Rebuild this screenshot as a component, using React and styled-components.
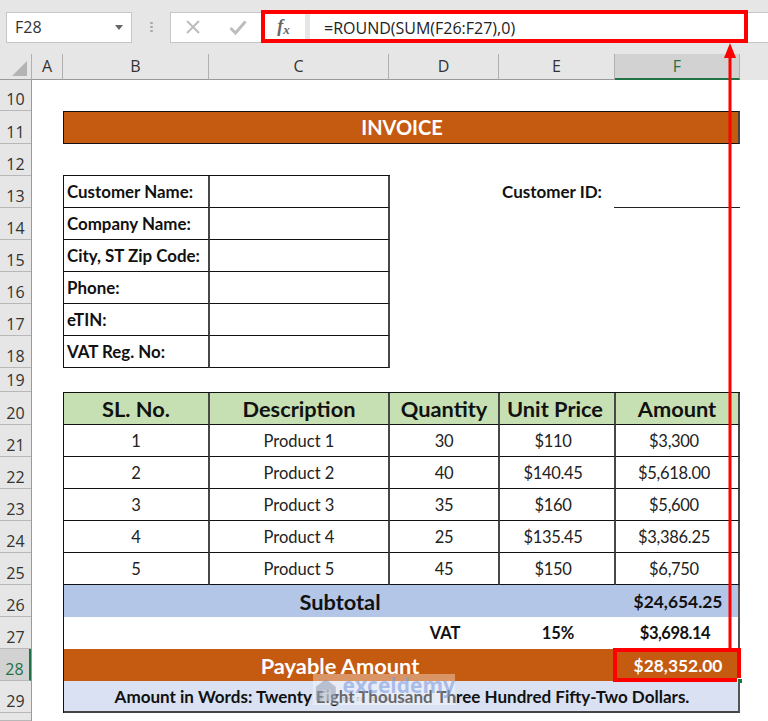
import React from "react";
import styled, { createGlobalStyle } from "styled-components";

const GlobalStyle = createGlobalStyle`
  html, body {
    margin: 0;
    padding: 0;
    background: #fff;
  }
  body {
    font-family: "Lato", "Open Sans", sans-serif;
    color: #111;
  }
`;

const COLS = [
  { name: "A", width: 31 },
  { name: "B", width: 146 },
  { name: "C", width: 180 },
  { name: "D", width: 110 },
  { name: "E", width: 116 },
  { name: "F", width: 125, active: true },
];

const ROWS = [
  [10, 31], [11, 33], [12, 32], [13, 32], [14, 32], [15, 32], [16, 32], [17, 32], [18, 32],
  [19, 24], [20, 33], [21, 32], [22, 32], [23, 32], [24, 32], [25, 32], [26, 32], [27, 32],
  [28, 32], [29, 32], [30, 8],
];

const customerLabels = ["Customer Name:", "Company Name:", "City, ST Zip Code:", "Phone:", "eTIN:", "VAT Reg. No:"];

const products = [
  [1, "Product 1", 30, "$110", "$3,300"],
  [2, "Product 2", 40, "$140.45", "$5,618.00"],
  [3, "Product 3", 35, "$160", "$5,600"],
  [4, "Product 4", 25, "$135.45", "$3,386.25"],
  [5, "Product 5", 45, "$150", "$6,750"],
];

const App = () => {
  return (
    <Page>
      <GlobalStyle />
      <Toolbar>
        <NameBox>
          F28
          <Caret />
        </NameBox>
        <Grip />
        <FormulaButtons>
          <svg width="14" height="14" viewBox="0 0 14 14">
            <path d="M1 1 L13 13 M13 1 L1 13" stroke="#bdbdbd" strokeWidth="2" fill="none" />
          </svg>
          <svg width="18" height="15" viewBox="0 0 18 15">
            <path d="M1.5 8 L6.5 13 L16.5 1.5" stroke="#bdbdbd" strokeWidth="3" fill="none" />
          </svg>
        </FormulaButtons>
        <FxButton>
          f<sub>x</sub>
        </FxButton>
        <FormulaInput>=ROUND(SUM(F26:F27),0)</FormulaInput>
      </Toolbar>

      <ColumnBar>
        <Corner>
          <svg width="15" height="15" viewBox="0 0 15 15">
            <path d="M15 0 V15 H0 Z" fill="#b4b4b4" />
          </svg>
        </Corner>
        {COLS.map((col) => (
          <ColumnHead key={col.name} $width={col.width} $active={col.active}>
            {col.name}
          </ColumnHead>
        ))}
      </ColumnBar>

      <SheetArea>
        <RowBar>
          {ROWS.map(([num, height]) => (
            <RowHead key={num} $height={height} $active={num === 28}>
              {num !== 30 && num}
            </RowHead>
          ))}
        </RowBar>

        <Sheet>
          <Spacer $height={31} />
          <InvoiceBar>INVOICE</InvoiceBar>
          <Spacer $height={31} />

          <CustomerSection>
            <Table>
              {customerLabels.map((label) => (
                <Row key={label}>
                  <LabelCell $width={146}>{label}</LabelCell>
                  <Cell $width={180} />
                </Row>
              ))}
            </Table>
            <CustomerId>
              <CustomerIdLabel>Customer ID:</CustomerIdLabel>
              <CustomerIdLine />
            </CustomerId>
          </CustomerSection>

          <Spacer $height={24} />

          <Table>
            <Row>
              <HeadCell $width={146}>SL. No.</HeadCell>
              <HeadCell $width={180}>Description</HeadCell>
              <HeadCell $width={110}>Quantity</HeadCell>
              <HeadCell $width={116} $shift={4}>Unit Price</HeadCell>
              <HeadCell $width={124}>Amount</HeadCell>
            </Row>
            {products.map(([no, name, qty, price, amount]) => (
              <Row key={no}>
                <Cell $width={146}>{no}</Cell>
                <Cell $width={180}>{name}</Cell>
                <NumberCell $width={110}>{qty}</NumberCell>
                <NumberCell $width={116} $shift={8}>{price}</NumberCell>
                <NumberCell $width={124} $shift={6}>{amount}</NumberCell>
              </Row>
            ))}
            <SummaryRow $bg="#b4c6e7">
              <SummaryCell $width={552} $size={21.8}>Subtotal</SummaryCell>
              <SummaryCell $width={124} $size={17.4}>$24,654.25</SummaryCell>
            </SummaryRow>
            <SummaryRow $bg="#fff">
              <SummaryCell $width={326} />
              <SummaryCell $width={110} $size={16.5}>VAT</SummaryCell>
              <SummaryCell $width={116} $size={16.5}>15%</SummaryCell>
              <TightSummaryCell $width={124} $shift={6}>$3,698.14</TightSummaryCell>
            </SummaryRow>
            <SummaryRow $bg="#c55a11" $color="#fff">
              <SummaryCell $width={552} $size={21.8}>Payable Amount</SummaryCell>
              <SummaryCell $width={124} $size={17.4}>$28,352.00</SummaryCell>
            </SummaryRow>
            <WordsRow $bg="#d9e1f2">
              <SummaryCell $width={676} $size={17.05}>
                Amount in Words: Twenty Eight Thousand Three Hundred Fifty-Two Dollars.
              </SummaryCell>
            </WordsRow>
          </Table>
        </Sheet>
      </SheetArea>

      <RedBox $left={261} $top={10} $width={487} $height={33} />
      <RedBox $left={613} $top={648} $width={128} $height={34} />
      <FillHandle />
      <Arrow width="14" height="606" viewBox="0 0 14 606">
        <path d="M7 0 L13 15 L1 15 Z" fill="#ff0000" />
        <path d="M7 14 V606" stroke="#ff0000" strokeWidth="3" fill="none" />
      </Arrow>

      <Watermark>
        <svg width="26" height="28" viewBox="0 0 26 28">
          <path d="M13 1 L25 10 V27 H1 V10 Z" fill="#8f9bb0" fillOpacity="0.55" />
          <path d="M9 14 H19 V27 H9 Z" fill="#ffffff" fillOpacity="0.3" />
        </svg>
        <WatermarkText>
          <WatermarkName>exceldemy</WatermarkName>
          <WatermarkTag>EXCEL · DATA · BI</WatermarkTag>
        </WatermarkText>
      </Watermark>
    </Page>
  );
};

const Page = styled.div`
  position: relative;
  width: 768px;
  height: 721px;
  overflow: hidden;
`;

const Toolbar = styled.div`
  display: flex;
  align-items: center;
  height: 54px;
  padding: 0 0 0 6px;
  box-sizing: border-box;
  background: #e6e6e6;
`;

const NameBox = styled.div`
  display: flex;
  align-items: center;
  justify-content: space-between;
  box-sizing: border-box;
  width: 126px;
  height: 31px;
  padding: 0 8px 0 8px;
  background: #fff;
  border: 1px solid #c6c6c6;
  font-family: "Open Sans", sans-serif;
  font-size: 16px;
  color: #333;
`;

const Caret = styled.span`
  width: 0;
  height: 0;
  border-left: 4px solid transparent;
  border-right: 4px solid transparent;
  border-top: 5px solid #666;
`;

const Grip = styled.div`
  width: 38px;
  height: 12px;
  background: radial-gradient(circle, #a8a8a8 1px, transparent 1.5px) center top / 3px 4px repeat-y;
`;

const FormulaButtons = styled.div`
  display: flex;
  align-items: center;
  justify-content: space-between;
  box-sizing: border-box;
  width: 92px;
  height: 31px;
  padding: 0 15px 0 15px;
  background: #fff;
  border: 1px solid #c6c6c6;
  border-right: none;
`;

const FxButton = styled.div`
  box-sizing: border-box;
  width: 48px;
  height: 31px;
  line-height: 28px;
  text-align: center;
  background: #fff;
  font-family: "Liberation Serif", serif;
  font-style: italic;
  font-weight: bold;
  font-size: 18px;
  color: #666;
  border-right: 5px solid #e6e6e6;

  sub {
    font-size: 13px;
    vertical-align: -2px;
  }
`;

const FormulaInput = styled.div`
  flex: 1;
  box-sizing: border-box;
  height: 31px;
  line-height: 31px;
  padding-left: 14px;
  background: #fff;
  border: 1px solid #c6c6c6;
  border-width: 1px 0;
  font-family: "Open Sans", sans-serif;
  font-size: 16px;
  color: #222;
`;

const ColumnBar = styled.div`
  display: flex;
  height: 26px;
  background: #e6e6e6;
`;

const Corner = styled.div`
  display: flex;
  align-items: flex-end;
  justify-content: flex-end;
  box-sizing: border-box;
  width: 32px;
  padding: 0 4px 3px 0;
  border-right: 1px solid #b0b0b0;
  border-bottom: 1px solid #9a9a9a;
`;

const ColumnHead = styled.div`
  box-sizing: border-box;
  width: ${(p) => p.$width}px;
  line-height: 25px;
  text-align: center;
  font-family: "Open Sans", sans-serif;
  font-size: 16px;
  color: ${(p) => (p.$active ? "#217346" : "#333")};
  background: ${(p) => (p.$active ? "#d2d2d2" : "#e6e6e6")};
  border-right: 1px solid #b0b0b0;
  border-bottom: ${(p) => (p.$active ? "2px solid #217346" : "1px solid #9a9a9a")};
`;

const SheetArea = styled.div`
  display: flex;
  height: 641px;
`;

const RowBar = styled.div`
  flex: none;
  width: 32px;
  background: #e6e6e6;
  border-right: 1px solid #9a9a9a;
  box-sizing: border-box;
`;

const RowHead = styled.div`
  box-sizing: border-box;
  height: ${(p) => p.$height}px;
  padding-top: ${(p) => p.$height - 22}px;
  line-height: 20px;
  text-align: center;
  font-family: "Open Sans", sans-serif;
  font-size: 16px;
  color: ${(p) => (p.$active ? "#217346" : "#333")};
  background: ${(p) => (p.$active ? "#d2d2d2" : "#e6e6e6")};
  border-bottom: 1px solid #b8b8b8;
  border-right: ${(p) => (p.$active ? "2px solid #217346" : "none")};
`;

const Sheet = styled.div`
  flex: 1;
  padding-left: 31px;
`;

const Spacer = styled.div`
  height: ${(p) => p.$height}px;
`;

const InvoiceBar = styled.div`
  box-sizing: border-box;
  width: 677px;
  height: 33px;
  line-height: 30px;
  text-align: center;
  padding-left: 2px;
  background: #c55a11;
  border: 1px solid #111;
  border-right: 2px solid #444;
  color: #fff;
  font-weight: 700;
  font-size: 20px;
`;

const CustomerSection = styled.div`
  display: flex;
`;

const Table = styled.div`
  flex: none;
  width: fit-content;
  border-top: 1px solid #111;
  border-left: 1px solid #111;
`;

const Row = styled.div`
  display: flex;
  height: 32px;
`;

const Cell = styled.div`
  box-sizing: border-box;
  flex: none;
  width: ${(p) => p.$width}px;
  display: flex;
  align-items: center;
  justify-content: center;
  padding-right: ${(p) => p.$shift || 0}px;
  border-right: 2px solid #484848;
  border-bottom: 1px solid #111;
  font-size: 16.5px;
  color: #222;
`;

const NumberCell = styled(Cell)`
  letter-spacing: -0.3px;
`;

const LabelCell = styled(Cell)`
  justify-content: flex-start;
  padding-left: 3px;
  font-weight: 700;
  font-size: 16.9px;
  color: #111;
`;

const HeadCell = styled(Cell)`
  background: #c6e0b4;
  font-weight: 700;
  font-size: 21.8px;
  color: #111;
`;

const CustomerId = styled.div`
  display: flex;
  margin-left: 112px;
  height: 33px;
`;

const CustomerIdLabel = styled.div`
  width: 112px;
  line-height: 34px;
  font-weight: 700;
  font-size: 17px;
  color: #111;
`;

const CustomerIdLine = styled.div`
  width: 126px;
  border-bottom: 1px solid #222;
`;

const SummaryRow = styled.div`
  display: flex;
  box-sizing: border-box;
  width: 676px;
  height: 32px;
  background: ${(p) => p.$bg};
  color: ${(p) => p.$color || "#111"};
  border-right: 2px solid #555;
`;

const WordsRow = styled(SummaryRow)`
  border-bottom: 2px solid #444;
`;

const SummaryCell = styled.div`
  box-sizing: border-box;
  flex: none;
  width: ${(p) => p.$width}px;
  display: flex;
  align-items: center;
  justify-content: center;
  padding-right: ${(p) => p.$shift || 0}px;
  font-weight: 700;
  font-size: ${(p) => p.$size || 16}px;
`;

const TightSummaryCell = styled(SummaryCell)`
  font-size: 16.5px;
  letter-spacing: -0.5px;
`;

const RedBox = styled.div`
  position: absolute;
  left: ${(p) => p.$left}px;
  top: ${(p) => p.$top}px;
  width: ${(p) => p.$width}px;
  height: ${(p) => p.$height}px;
  box-sizing: border-box;
  border: 4px solid #ff0000;
`;

const FillHandle = styled.div`
  position: absolute;
  left: 737px;
  top: 678px;
  width: 5px;
  height: 5px;
  background: #217346;
  border-left: 1px solid #fff;
  border-top: 1px solid #fff;
  box-sizing: border-box;
`;

const Arrow = styled.svg`
  position: absolute;
  left: 723px;
  top: 43px;
`;

const Watermark = styled.div`
  position: absolute;
  left: 313px;
  top: 674px;
  width: 142px;
  height: 31px;
  display: flex;
  align-items: center;
  gap: 6px;
  padding-left: 2px;
  box-sizing: border-box;
  background: rgba(255, 255, 255, 0.36);
`;

const WatermarkText = styled.div`
  display: flex;
  flex-direction: column;
  margin-top: -2px;
`;

const WatermarkName = styled.div`
  font-family: "Open Sans", sans-serif;
  font-weight: 700;
  font-size: 21px;
  line-height: 22px;
  color: rgba(125, 155, 225, 0.6);
`;

const WatermarkTag = styled.div`
  font-family: "Open Sans", sans-serif;
  font-size: 6px;
  line-height: 7px;
  letter-spacing: 1px;
  color: rgba(110, 120, 140, 0.5);
`;

export default App;
